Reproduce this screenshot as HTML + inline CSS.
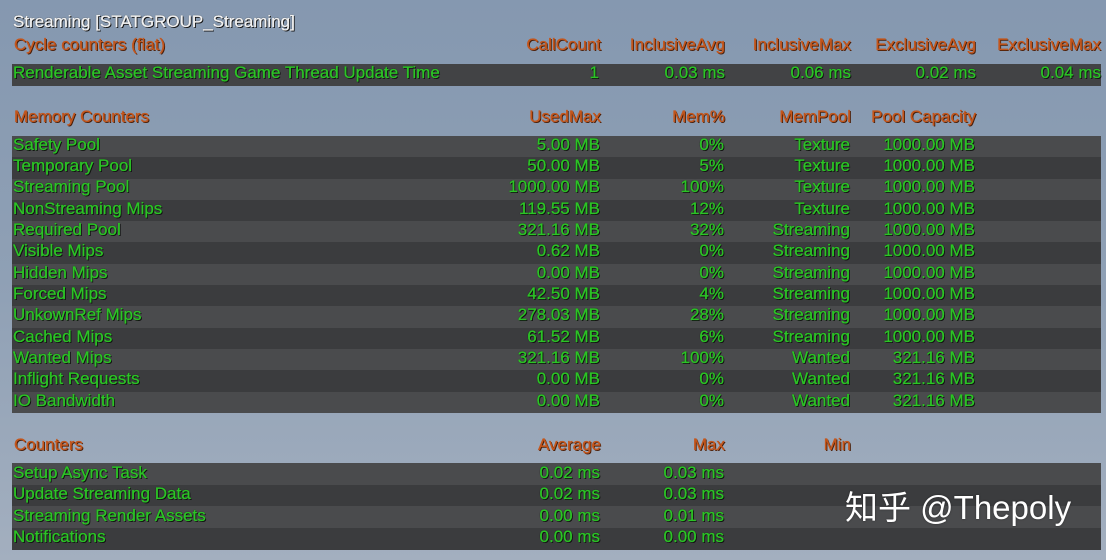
<!DOCTYPE html>
<html><head><meta charset="utf-8"><style>
*{margin:0;padding:0;box-sizing:border-box}
body{width:1106px;height:560px;overflow:hidden;background:linear-gradient(180deg,#8598b0 0%,#8fa0b5 50%,#a3afbf 100%);font-family:"Liberation Sans Narrow","Liberation Sans",sans-serif;font-size:17px;position:relative}
.t{position:absolute;white-space:nowrap;line-height:21px;text-shadow:1px 1px 0 #111,0 0 1px #000;-webkit-text-stroke:0.3px currentColor}
.g{color:#2cc426}
.o{color:#c4561c;text-shadow:1px 1px 0 #4a1e08}
.w{color:#f2f2f2}
.r{text-align:right}
.band{position:absolute;left:12px;width:1089px}
.row{height:21.3px}
.a{background:#4a4b4d}.b{background:#3b3c3e}
</style></head><body>
<div class="t w" style="left:13px;top:11px">Streaming [STATGROUP_Streaming]</div>
<div class="t o" style="left:14px;top:34px">Cycle counters (flat)</div>
<div class="t o r" style="right:505px;top:34px">CallCount</div>
<div class="t o r" style="right:381px;top:34px">InclusiveAvg</div>
<div class="t o r" style="right:255px;top:34px">InclusiveMax</div>
<div class="t o r" style="right:130px;top:34px">ExclusiveAvg</div>
<div class="t o r" style="right:5px;top:34px">ExclusiveMax</div>
<div class="band" style="top:64px;height:22px;background:#424345"></div>
<div class="t g" style="left:13px;top:62px">Renderable Asset Streaming Game Thread Update Time</div>
<div class="t g r" style="right:507px;top:62px">1</div>
<div class="t g r" style="right:381px;top:62px">0.03 ms</div>
<div class="t g r" style="right:255px;top:62px">0.06 ms</div>
<div class="t g r" style="right:130px;top:62px">0.02 ms</div>
<div class="t g r" style="right:5px;top:62px">0.04 ms</div>

<div class="t o" style="left:14px;top:106px">Memory Counters</div>
<div class="t o r" style="right:505px;top:106px">UsedMax</div>
<div class="t o r" style="right:381px;top:106px">Mem%</div>
<div class="t o r" style="right:255px;top:106px">MemPool</div>
<div class="t o r" style="right:130px;top:106px">Pool Capacity</div>

<div class="band" style="top:136px">
<div class="row a"></div><div class="row b"></div><div class="row a"></div><div class="row b"></div><div class="row a"></div><div class="row b"></div><div class="row a"></div><div class="row b"></div><div class="row a"></div><div class="row b"></div><div class="row a"></div><div class="row b"></div><div class="row a"></div>
</div>

<div class="t o" style="left:14px;top:434px">Counters</div>
<div class="t o r" style="right:505px;top:434px">Average</div>
<div class="t o r" style="right:381px;top:434px">Max</div>
<div class="t o r" style="right:255px;top:434px">Min</div>
<div class="band" style="top:463px">
<div class="row a" style="height:21.7px"></div><div class="row b" style="height:21.7px"></div><div class="row a" style="height:21.7px"></div><div class="row b" style="height:21.7px"></div>
</div>

<div class="t g" style="left:13px;top:462px">Setup Async Task</div>
<div class="t g r" style="right:506px;top:462px">0.02 ms</div>
<div class="t g r" style="right:382px;top:462px">0.03 ms</div>
<div class="t g" style="left:13px;top:483px">Update Streaming Data</div>
<div class="t g r" style="right:506px;top:483px">0.02 ms</div>
<div class="t g r" style="right:382px;top:483px">0.03 ms</div>
<div class="t g" style="left:13px;top:505px">Streaming Render Assets</div>
<div class="t g r" style="right:506px;top:505px">0.00 ms</div>
<div class="t g r" style="right:382px;top:505px">0.01 ms</div>
<div class="t g" style="left:13px;top:526px">Notifications</div>
<div class="t g r" style="right:506px;top:526px">0.00 ms</div>
<div class="t g r" style="right:382px;top:526px">0.00 ms</div>

<div class="t" style="left:845px;top:489px;font-family:'Liberation Sans','Noto Sans CJK SC',sans-serif;font-size:33px;line-height:38px;color:#fff;text-shadow:0 0 2px rgba(0,0,0,.4);-webkit-text-stroke:0">知乎 @Thepoly</div>

<div class="t g" style="left:13px;top:134px">Safety Pool</div><div class="t g r" style="right:506px;top:134px">5.00 MB</div><div class="t g r" style="right:382px;top:134px">0%</div><div class="t g r" style="right:256px;top:134px">Texture</div><div class="t g r" style="right:131px;top:134px">1000.00 MB</div>
<div class="t g" style="left:13px;top:155px">Temporary Pool</div><div class="t g r" style="right:506px;top:155px">50.00 MB</div><div class="t g r" style="right:382px;top:155px">5%</div><div class="t g r" style="right:256px;top:155px">Texture</div><div class="t g r" style="right:131px;top:155px">1000.00 MB</div>
<div class="t g" style="left:13px;top:176px">Streaming Pool</div><div class="t g r" style="right:506px;top:176px">1000.00 MB</div><div class="t g r" style="right:382px;top:176px">100%</div><div class="t g r" style="right:256px;top:176px">Texture</div><div class="t g r" style="right:131px;top:176px">1000.00 MB</div>
<div class="t g" style="left:13px;top:198px">NonStreaming Mips</div><div class="t g r" style="right:506px;top:198px">119.55 MB</div><div class="t g r" style="right:382px;top:198px">12%</div><div class="t g r" style="right:256px;top:198px">Texture</div><div class="t g r" style="right:131px;top:198px">1000.00 MB</div>
<div class="t g" style="left:13px;top:219px">Required Pool</div><div class="t g r" style="right:506px;top:219px">321.16 MB</div><div class="t g r" style="right:382px;top:219px">32%</div><div class="t g r" style="right:256px;top:219px">Streaming</div><div class="t g r" style="right:131px;top:219px">1000.00 MB</div>
<div class="t g" style="left:13px;top:240px">Visible Mips</div><div class="t g r" style="right:506px;top:240px">0.62 MB</div><div class="t g r" style="right:382px;top:240px">0%</div><div class="t g r" style="right:256px;top:240px">Streaming</div><div class="t g r" style="right:131px;top:240px">1000.00 MB</div>
<div class="t g" style="left:13px;top:262px">Hidden Mips</div><div class="t g r" style="right:506px;top:262px">0.00 MB</div><div class="t g r" style="right:382px;top:262px">0%</div><div class="t g r" style="right:256px;top:262px">Streaming</div><div class="t g r" style="right:131px;top:262px">1000.00 MB</div>
<div class="t g" style="left:13px;top:283px">Forced Mips</div><div class="t g r" style="right:506px;top:283px">42.50 MB</div><div class="t g r" style="right:382px;top:283px">4%</div><div class="t g r" style="right:256px;top:283px">Streaming</div><div class="t g r" style="right:131px;top:283px">1000.00 MB</div>
<div class="t g" style="left:13px;top:304px">UnkownRef Mips</div><div class="t g r" style="right:506px;top:304px">278.03 MB</div><div class="t g r" style="right:382px;top:304px">28%</div><div class="t g r" style="right:256px;top:304px">Streaming</div><div class="t g r" style="right:131px;top:304px">1000.00 MB</div>
<div class="t g" style="left:13px;top:326px">Cached Mips</div><div class="t g r" style="right:506px;top:326px">61.52 MB</div><div class="t g r" style="right:382px;top:326px">6%</div><div class="t g r" style="right:256px;top:326px">Streaming</div><div class="t g r" style="right:131px;top:326px">1000.00 MB</div>
<div class="t g" style="left:13px;top:347px">Wanted Mips</div><div class="t g r" style="right:506px;top:347px">321.16 MB</div><div class="t g r" style="right:382px;top:347px">100%</div><div class="t g r" style="right:256px;top:347px">Wanted</div><div class="t g r" style="right:131px;top:347px">321.16 MB</div>
<div class="t g" style="left:13px;top:368px">Inflight Requests</div><div class="t g r" style="right:506px;top:368px">0.00 MB</div><div class="t g r" style="right:382px;top:368px">0%</div><div class="t g r" style="right:256px;top:368px">Wanted</div><div class="t g r" style="right:131px;top:368px">321.16 MB</div>
<div class="t g" style="left:13px;top:390px">IO Bandwidth</div><div class="t g r" style="right:506px;top:390px">0.00 MB</div><div class="t g r" style="right:382px;top:390px">0%</div><div class="t g r" style="right:256px;top:390px">Wanted</div><div class="t g r" style="right:131px;top:390px">321.16 MB</div>
</body></html>
